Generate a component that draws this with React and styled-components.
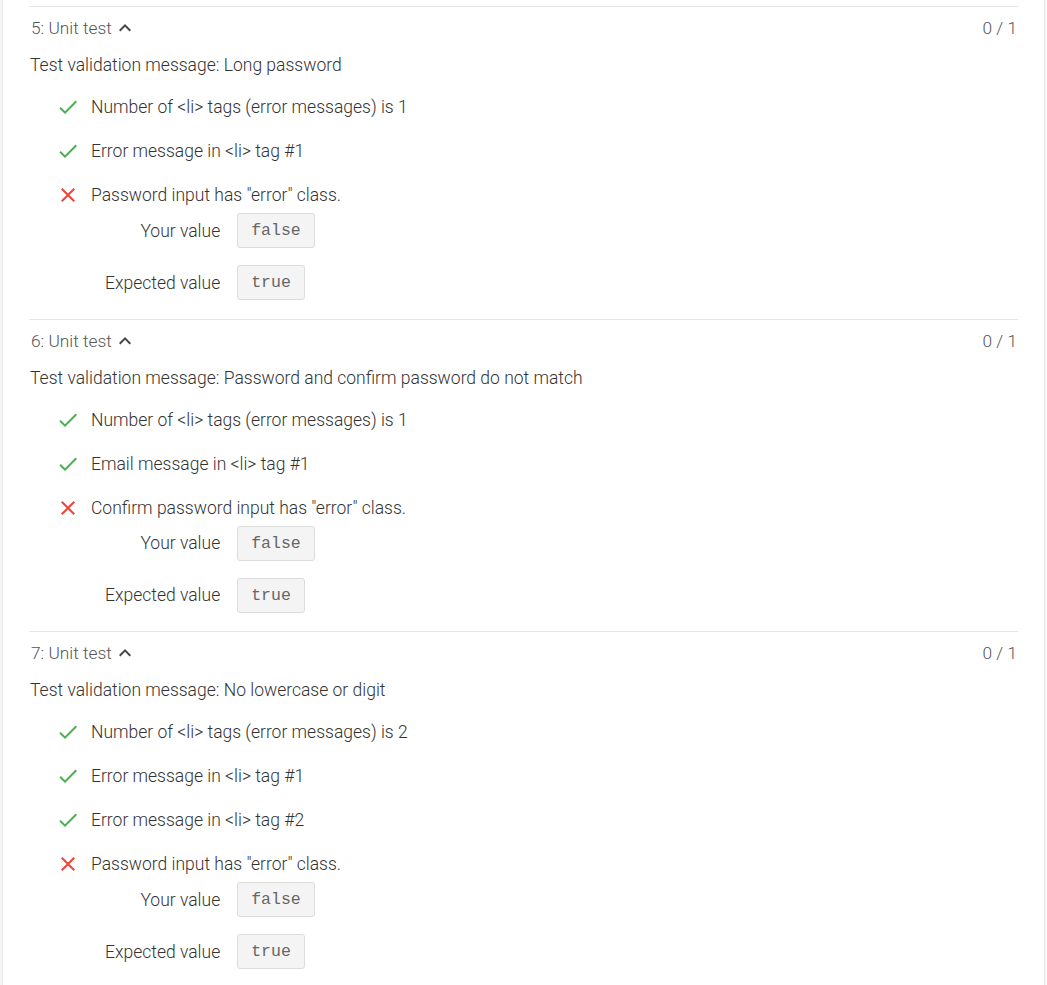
import React from "react";
import styled, { createGlobalStyle } from "styled-components";
import { MdCheck, MdClose, MdExpandLess } from "react-icons/md";

const GlobalStyle = createGlobalStyle`
  body {
    margin: 0;
    background: #f7f7f7;
    font-family: Roboto, "Liberation Sans", sans-serif;
  }
`;

const Card = styled.div`
  margin: 0 2px;
  background: #fff;
  border-left: 1px solid #e8e8e8;
  border-right: 1px solid #e8e8e8;
  padding: 6px 26px 0 26px;
  min-height: 979px;
`;

const Section = styled.section`
  border-top: 1px solid #e6e6e6;
  padding: 9px 0 18.5px;
`;

const Header = styled.div`
  display: flex;
  justify-content: space-between;
  align-items: center;
  height: 24px;
  padding-left: 2px;
  font-size: 17.3px;
  font-weight: 300;
  color: #555;
`;

const Title = styled.div`
  display: flex;
  align-items: center;

  svg {
    margin-left: 1px;
    color: #444;
  }
`;

const Score = styled.div`
  padding-right: 1px;
  line-height: 24px;
`;

const Description = styled.p`
  margin: 13px 0 18px;
  padding-left: 1px;
  font-size: 17.5px;
  line-height: 24px;
  font-weight: 300;
  color: #333;
`;

const Checks = styled.ul`
  list-style: none;
  margin: 0;
  padding: 0 0 0 27px;
  display: flex;
  flex-direction: column;
  gap: 20px;
`;

const Check = styled.li`
  display: flex;
  align-items: center;
  gap: 11px;
  font-size: 17.5px;
  line-height: 24px;
  font-weight: 300;
  color: #333;

  svg {
    flex: none;
    color: ${(p) => (p.$ok ? "#4caf50" : "#f44336")};
  }
`;

const Values = styled.div`
  display: grid;
  grid-template-columns: auto auto;
  justify-content: start;
  align-items: center;
  column-gap: 17px;
  row-gap: 17px;
  margin: 6px 0 0 76px;
`;

const Label = styled.span`
  text-align: right;
  font-size: 17.5px;
  font-weight: 300;
  color: #333;
`;

const Code = styled.code`
  justify-self: start;
  display: inline-flex;
  align-items: center;
  height: 35px;
  box-sizing: border-box;
  padding: 0 13px;
  background: #f4f4f4;
  border: 1px solid #dcdcdc;
  border-radius: 3px;
  font-family: "Liberation Mono", "Courier New", monospace;
  font-size: 16.5px;
  color: #666;
`;

const tests = [
  {
    id: 5,
    message: "Long password",
    checks: [
      { ok: true, text: "Number of <li> tags (error messages) is 1" },
      { ok: true, text: "Error message in <li> tag #1" },
      { ok: false, text: 'Password input has "error" class.' },
    ],
  },
  {
    id: 6,
    message: "Password and confirm password do not match",
    checks: [
      { ok: true, text: "Number of <li> tags (error messages) is 1" },
      { ok: true, text: "Email message in <li> tag #1" },
      { ok: false, text: 'Confirm password input has "error" class.' },
    ],
  },
  {
    id: 7,
    message: "No lowercase or digit",
    checks: [
      { ok: true, text: "Number of <li> tags (error messages) is 2" },
      { ok: true, text: "Error message in <li> tag #1" },
      { ok: true, text: "Error message in <li> tag #2" },
      { ok: false, text: 'Password input has "error" class.' },
    ],
  },
];

const UnitTest = ({ test }) => (
  <Section>
    <Header>
      <Title>
        {test.id}: Unit test
        <MdExpandLess size={24} />
      </Title>
      <Score>0 / 1</Score>
    </Header>
    <Description>Test validation message: {test.message}</Description>
    <Checks>
      {test.checks.map((c, i) => (
        <Check key={i} $ok={c.ok}>
          {c.ok ? <MdCheck size={24} /> : <MdClose size={24} />}
          {c.text}
        </Check>
      ))}
    </Checks>
    <Values>
      <Label>Your value</Label>
      <Code>false</Code>
      <Label>Expected value</Label>
      <Code>true</Code>
    </Values>
  </Section>
);

export default function App() {
  return (
    <>
      <GlobalStyle />
      <Card>
        {tests.map((t) => (
          <UnitTest key={t.id} test={t} />
        ))}
      </Card>
    </>
  );
}
